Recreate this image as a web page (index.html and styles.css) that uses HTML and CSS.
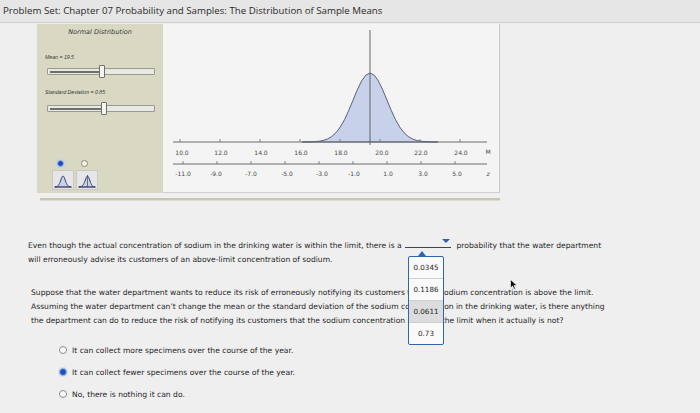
FILE: index.html
```html
<!DOCTYPE html>
<html lang="en">
<head>
<meta charset="utf-8">
<title>Problem Set: Chapter 07</title>
<link rel="stylesheet" href="styles.css">
</head>
<body>
<header class="title">Problem Set: Chapter 07 Probability and Samples: The Distribution of Sample Means</header>

<section class="sim">
  <div class="controls">
    <div class="ctl-title">Normal Distribution</div>
    <div class="ctl-label first">Mean = 19.5</div>
    <div class="slider"><div class="fill" style="width:52px"></div><div class="thumb" style="left:51px"></div></div>
    <div class="ctl-label">Standard Deviation = 0.85</div>
    <div class="slider second"><div class="fill" style="width:54px"></div><div class="thumb" style="left:53px"></div></div>
    <div class="modes">
      <div class="mode-radios">
        <span class="pradio on"></span>
        <span class="pradio"></span>
      </div>
      <div class="mode-icons">
        <span class="micon"><svg width="20" height="17" viewBox="0 0 20 17"><path d="M2 15 C5 15 6 13 7.5 9 C8.5 6 9.2 4 10 4 C10.8 4 11.5 6 12.5 9 C14 13 15 15 18 15 Z" fill="#c9d2ea" stroke="#3c4466" stroke-width="1"/><line x1="1" y1="15" x2="19" y2="15" stroke="#3c4466" stroke-width="0.8"/></svg></span>
        <span class="micon"><svg width="20" height="17" viewBox="0 0 20 17"><path d="M2 15 C5 15 6.5 13 8 9 C9 6 9.7 4 10.5 4 C11.3 4 12 6 13 9 C14.5 13 15.5 15 18 15 Z" fill="#c9d2ea" stroke="#3c4466" stroke-width="1"/><line x1="10.5" y1="3" x2="10.5" y2="15" stroke="#3c4466" stroke-width="0.7"/><line x1="1" y1="15" x2="19" y2="15" stroke="#3c4466" stroke-width="0.8"/></svg></span>
      </div>
    </div>
  </div>
  <div class="chart">
    <svg width="336" height="169" viewBox="0 0 336 169">
      <path d="M139 118 L147.5 117.85 L156 117.23 L160.25 116.43 L164.5 114.97 L168.75 112.51 L173 108.66 L177.25 103.08 L181.5 95.6 L185.75 86.41 L190 76.15 L194.25 65.92 L198.5 57.11 L202.75 51.13 L207 49 L211.25 51.13 L215.5 57.11 L219.75 65.92 L224 76.15 L228.25 86.41 L232.5 95.6 L236.75 103.08 L241 108.66 L245.25 112.51 L249.5 114.97 L253.75 116.43 L258 117.23 L266.5 117.85 L275 118 Z" fill="#c7d1e9" stroke="#4b5274" stroke-width="0.9"/>
      <line x1="10" y1="118" x2="324" y2="118" stroke="#6d6d6d" stroke-width="1"/>
      <line x1="207" y1="6" x2="207" y2="121" stroke="#555" stroke-width="0.9"/>
      <g stroke="#6d6d6d" stroke-width="0.8">
        <line x1="17" y1="115" x2="17" y2="118"/><line x1="57" y1="115" x2="57" y2="118"/><line x1="97" y1="115" x2="97" y2="118"/><line x1="137" y1="115" x2="137" y2="118"/><line x1="177" y1="115" x2="177" y2="118"/><line x1="217" y1="115" x2="217" y2="118"/><line x1="257" y1="115" x2="257" y2="118"/><line x1="297" y1="115" x2="297" y2="118"/>
      </g>
      <g class="axis-label" text-anchor="middle">
        <text x="19" y="131">10.0</text><text x="58" y="131">12.0</text><text x="98" y="131">14.0</text><text x="138" y="131">16.0</text><text x="178" y="131">18.0</text><text x="219" y="131">20.0</text><text x="258" y="131">22.0</text><text x="298" y="131">24.0</text><text x="325" y="130">M</text>
      </g>
      <line x1="10" y1="140" x2="324" y2="140" stroke="#6d6d6d" stroke-width="1"/>
      <g stroke="#6d6d6d" stroke-width="0.8">
        <line x1="20" y1="137" x2="20" y2="140"/><line x1="54" y1="137" x2="54" y2="140"/><line x1="88" y1="137" x2="88" y2="140"/><line x1="122" y1="137" x2="122" y2="140"/><line x1="156" y1="137" x2="156" y2="140"/><line x1="190" y1="137" x2="190" y2="140"/><line x1="224" y1="137" x2="224" y2="140"/><line x1="258" y1="137" x2="258" y2="140"/><line x1="292" y1="137" x2="292" y2="140"/>
      </g>
      <g class="axis-label" text-anchor="middle">
        <text x="20" y="152">-11.0</text><text x="53" y="152">-9.0</text><text x="88" y="152">-7.0</text><text x="124" y="152">-5.0</text><text x="159" y="152">-3.0</text><text x="191" y="152">-1.0</text><text x="225" y="152">1.0</text><text x="260" y="152">3.0</text><text x="294" y="152">5.0</text><text x="325" y="152" class="ital">z</text>
      </g>
    </svg>
  </div>
</section>
<div class="sim-shadow"></div>

<section class="question">
  <p class="q1">Even though the actual concentration of sodium in the drinking water is within the limit, there is a <span class="select"><span class="caret-down"></span></span> probability that the water department<br>will erroneously advise its customers of an above-limit concentration of sodium.</p>
  <p class="q2">Suppose that the water department wants to reduce its risk of erroneously notifying its customers that the sodium concentration is above the limit.<br>Assuming the water department can’t change the mean or the standard deviation of the sodium concentration in the drinking water, is there anything<br>the department can do to reduce the risk of notifying its customers that the sodium concentration is above the limit when it actually is not?</p>
  <ul class="options">
    <li><span class="radio"></span>It can collect more specimens over the course of the year.</li>
    <li><span class="radio on"></span>It can collect fewer specimens over the course of the year.</li>
    <li><span class="radio"></span>No, there is nothing it can do.</li>
  </ul>

  <div class="popup">
    <span class="popup-caret"></span>
    <div class="opt">0.0345</div>
    <div class="opt">0.1186</div>
    <div class="opt hover">0.0611</div>
    <div class="opt last">0.73</div>
  </div>
  <svg class="cursor" width="8" height="11" viewBox="0 0 8 11"><path d="M0.5 0.5 L0.5 9 L2.6 7 L4 10.3 L5.4 9.7 L4 6.6 L7 6.6 Z" fill="#111" stroke="#fff" stroke-width="0.6"/></svg>
</section>
</body>
</html>
```

FILE: styles.css
```css
html, body {
  margin: 0;
  padding: 0;
}
body {
  width: 700px;
  height: 413px;
  overflow: hidden;
  background: #efefef;
  font-family: "DejaVu Sans", Verdana, sans-serif;
  color: #262626;
  position: relative;
}
.title {
  height: 22px;
  line-height: 22px;
  padding-left: 3px;
  background: #e6e6e6;
  border-bottom: 1px solid #d2d2d2;
  font-family: "Open Sans", "Liberation Sans", sans-serif;
  font-size: 9.7px;
  color: #2a2a2a;
  white-space: nowrap;
}
.sim {
  display: flex;
  margin-top: 1px;
  padding-left: 37px;
  height: 169px;
}
.controls {
  width: 126px;
  background: #d8d8c3;
  display: flex;
  flex-direction: column;
}
.ctl-title {
  margin-top: 4px;
  line-height: 8px;
  font-size: 6.5px;
  font-style: italic;
  text-align: center;
  color: #3a3a3a;
}
.ctl-label {
  margin-top: 14px;
  padding-left: 8px;
  line-height: 6px;
  font-size: 5.2px;
  font-style: italic;
  color: #3a3a3a;
  font-family: "Liberation Sans", sans-serif;
}
.ctl-label.first {
  margin-top: 18px;
}
.slider {
  position: relative;
  margin: 8px 0 0 10px;
  width: 106px;
  height: 5px;
  background: #e9e9e4;
  border: 1px solid #9a9a92;
  border-radius: 1px;
}
.slider.second {
  margin-top: 10px;
}
.slider .fill {
  position: absolute;
  left: 2px;
  top: 1.5px;
  height: 2px;
  background: #6f6f6a;
}
.slider .thumb {
  position: absolute;
  top: -4px;
  width: 4px;
  height: 11px;
  background: #f4f4f0;
  border: 1px solid #707068;
  border-radius: 1px;
}
.modes {
  margin-top: 48px;
  padding-left: 15px;
}
.mode-radios {
  display: flex;
  gap: 17px;
  padding-left: 5px;
  height: 7px;
}
.pradio {
  width: 5px;
  height: 5px;
  border-radius: 50%;
  border: 1px solid #8a8a80;
  background: #f7f3e6;
}
.pradio.on {
  background: #1d4fb0;
  border-color: #9fb7e4;
  box-shadow: 0 0 0 1px #c2d2ef;
}
.mode-icons {
  display: flex;
  gap: 2px;
  margin-top: 3px;
}
.micon {
  width: 20px;
  height: 18px;
  background: #e6e6ea;
  border: 1px solid #c9c9c2;
  display: flex;
  align-items: flex-end;
  justify-content: center;
}
.micon svg {
  display: block;
}
.chart {
  width: 336px;
  background: #f4f4f4;
  border-right: 1px solid #c4c4c4;
  border-bottom: 1px solid #cfcfcf;
}
.chart svg {
  display: block;
}
.axis-label text {
  font-family: "DejaVu Sans", sans-serif;
  font-size: 6px;
  fill: #4a4a4a;
}
.axis-label .ital {
  font-style: italic;
}
.sim-shadow {
  margin: 5px 0 0 40px;
  width: 460px;
  height: 2px;
  background: #c9c4b6;
  border-bottom: 1px solid #e0ddd4;
}
.question {
  position: relative;
}
.q1, .q2 {
  margin: 0;
  padding-left: 28px;
  font-size: 7.6px;
  line-height: 14px;
  white-space: nowrap;
}
.q1 {
  padding-top: 38px;
}
.q2 {
  margin-top: 19px;
  padding-left: 31px;
}
.select {
  position: relative;
  display: inline-block;
  width: 46px;
  height: 8px;
  border-bottom: 1px solid #444;
  margin: 0 3px 0 1px;
}
.caret-down {
  position: absolute;
  right: 1px;
  top: 0;
  width: 0;
  height: 0;
  border-left: 4px solid transparent;
  border-right: 4px solid transparent;
  border-top: 4px solid #2a63b2;
}
.options {
  list-style: none;
  margin: 11px 0 0 0;
  padding: 0 0 0 59px;
}
.options li {
  display: flex;
  align-items: center;
  height: 22px;
  font-size: 7.6px;
  white-space: nowrap;
}
.radio {
  width: 6px;
  height: 6px;
  border-radius: 50%;
  border: 1px solid #8c8c8c;
  background: #fafafa;
  margin-right: 5px;
}
.radio.on {
  background: #1f52b8;
  border-color: #a5bce6;
  box-shadow: 0 0 0 1px #d0dcf3;
}
.popup {
  position: absolute;
  left: 408px;
  top: 55px;
  width: 34px;
  background: #fafafa;
  border: 1.5px solid #2f65ab;
  border-radius: 2px;
  font-family: "DejaVu Sans", sans-serif;
  font-size: 7.2px;
}
.popup-caret {
  position: absolute;
  left: 9px;
  top: -6px;
  width: 0;
  height: 0;
  border-left: 4px solid transparent;
  border-right: 4px solid transparent;
  border-bottom: 5px solid #2f65ab;
}
.opt {
  height: 21px;
  line-height: 21px;
  text-align: center;
  border-bottom: 1px solid #cfcfcf;
}
.opt.hover {
  background: #dcdcdc;
}
.opt.last {
  border-bottom: none;
}
.cursor {
  position: absolute;
  left: 510px;
  top: 78px;
}
```
